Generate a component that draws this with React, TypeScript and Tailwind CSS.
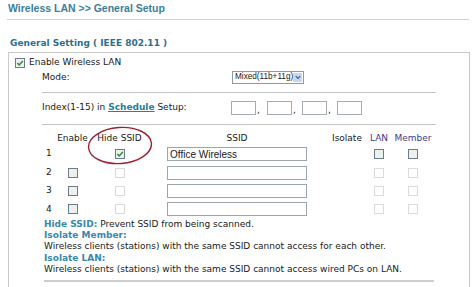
import clsx from "clsx"

const body = "font-['DejaVu_Sans',sans-serif]"

function Check({ checked, disabled }: { checked?: boolean; disabled?: boolean }) {
  return (
    <span
      className={clsx(
        "flex h-[10px] w-[10px] items-center justify-center border",
        disabled ? "border-[#dadada] bg-white" : "border-[#6a7c8e] bg-[#eef0ec]"
      )}
    >
      {checked && (
        <svg viewBox="0 0 8 8" className="h-[8px] w-[8px]">
          <path d="M1.3 4 L3.2 5.9 L6.8 2" stroke="#2f8a3c" strokeWidth="1.5" fill="none" />
        </svg>
      )}
    </span>
  )
}

function SmallBox() {
  return <span className="block h-[14px] w-[25px] border border-[#a4adb6] bg-white" />
}

const rows = [
  { n: "1", enable: false, hide: true, ssid: "Office Wireless", on: true },
  { n: "2", enable: true, hide: false, ssid: "", on: false },
  { n: "3", enable: true, hide: false, ssid: "", on: false },
  { n: "4", enable: true, hide: false, ssid: "", on: false },
]

export default function App() {
  return (
    <div className={clsx("h-[287px] w-[474px] overflow-hidden bg-white text-[9px] text-[#202020]", body)}>
      {/* page title */}
      <div className="ml-[8px] pt-[2px] font-['Liberation_Sans',Arial,sans-serif] text-[10.5px] font-bold leading-[12px] text-[#3c7e9d]">
        Wireless LAN &gt;&gt; General Setup
      </div>
      <div className="ml-[7px] mt-[5px] h-px w-[462px] bg-[#cfcfcf]" />

      <div className="ml-[10px] mt-[18px] font-bold leading-[11px] text-[#2f6f8e]">
        General Setting ( IEEE 802.11 )
      </div>

      <div className="ml-[8px] mt-[3px] w-[462px] border border-b-0 border-[#c9c9c9] pb-[10px]">
        <div className="ml-[6px] mt-[4px] flex h-[11px] items-center gap-[4px] leading-[11px]">
          <Check checked />
          <span>Enable Wireless LAN</span>
        </div>

        {/* mode */}
        <div className="ml-[33px] mt-[3px] flex h-[13px] items-center">
          <span className="w-[190px]">Mode:</span>
          <span className="flex h-[13px] w-[72px] items-center justify-between whitespace-nowrap border border-[#8a9aab] bg-white pl-[2px] pr-[1px] font-['Liberation_Sans',Arial,sans-serif] text-[8.2px] leading-none">
            Mixed(11b+11g)
            <span className="flex h-[9px] w-[9px] items-center justify-center rounded-[1px] bg-[#c6d6f2]">
              <svg viewBox="0 0 8 6" className="h-[5px] w-[6px]">
                <path d="M1 1.2 L4 4.3 L7 1.2" stroke="#4d6185" strokeWidth="1.6" fill="none" />
              </svg>
            </span>
          </span>
        </div>
        <div className="ml-[33px] mt-[8px] h-px w-[394px] bg-[#c4c4c4]" />

        {/* schedule */}
        <div className="ml-[33px] mt-[8px] flex h-[14px] items-center">
          <span className="w-[189px]">
            Index(1-15) in{" "}
            <span className="font-bold text-[#2b7d9c] underline">Schedule</span> Setup:
          </span>
          <SmallBox />
          <span className="flex h-[14px] w-[11px] items-end pl-[1px] leading-none">,</span>
          <SmallBox />
          <span className="flex h-[14px] w-[10px] items-end pl-[1px] leading-none">,</span>
          <SmallBox />
          <span className="flex h-[14px] w-[10px] items-end pl-[1px] leading-none">,</span>
          <SmallBox />
        </div>
        <div className="ml-[33px] mt-[9px] h-px w-[394px] bg-[#c4c4c4]" />

        {/* ssid table */}
        <div className="relative ml-[33px] mt-[8px]">
          <div className="flex h-[11px] items-center leading-[11px]">
            <span className="w-[22px]" />
            <span className="flex w-[17px] justify-center whitespace-nowrap">Enable</span>
            <span className="flex w-[77px] justify-center whitespace-nowrap">Hide SSID</span>
            <span className="flex w-[149px] justify-center pl-[9px]">SSID</span>
            <span className="w-[59px] pl-[25px]">Isolate</span>
            <span className="flex w-[26px] justify-center text-[#3b3b8a]">LAN</span>
            <span className="flex w-[42px] justify-center text-[#3b3b8a]">Member</span>
          </div>
          <div className="mt-[1px]">
            {rows.map((r) => (
              <div key={r.n} className="flex h-[18.4px] items-center">
                <span className="w-[22px] pl-[4px]">{r.n}</span>
                <span className="flex w-[17px] justify-center">{r.enable && <Check />}</span>
                <span className="flex w-[77px] justify-center">
                  <Check checked={r.hide} disabled={!r.on} />
                </span>
                <span className="w-[149px] pl-[9px]">
                  <span className="flex h-[14px] w-[140px] items-center border border-[#9ba5ae] bg-white pl-[2px] font-['Liberation_Sans',Arial,sans-serif] text-[10px]">
                    {r.ssid}
                  </span>
                </span>
                <span className="w-[59px]" />
                <span className="flex w-[26px] justify-center">
                  <Check disabled={!r.on} />
                </span>
                <span className="flex w-[42px] justify-center">
                  <Check disabled={!r.on} />
                </span>
              </div>
            ))}
          </div>
          <svg className="absolute left-[45px] top-[-7px]" width="66" height="39" viewBox="0 0 66 39">
            <ellipse cx="33" cy="19.5" rx="31.5" ry="18" fill="none" stroke="#9c2232" strokeWidth="1.4" transform="rotate(-4 33 19.5)" />
          </svg>
        </div>

        {/* notes */}
        <div className="ml-[35px] mt-[0.5px] leading-[11.2px]">
          <div>
            <span className="font-bold text-[#3a88ab]">Hide SSID:</span> Prevent SSID from being scanned.
          </div>
          <div className="font-bold text-[#3a88ab]">Isolate Member:</div>
          <div>Wireless clients (stations) with the same SSID cannot access for each other.</div>
          <div className="font-bold text-[#3a88ab]">Isolate LAN:</div>
          <div>Wireless clients (stations) with the same SSID cannot access wired PCs on LAN.</div>
        </div>
        <div className="ml-[35px] mt-[4.5px] h-[2px] w-[390px] bg-[#cdcdcd]" />
      </div>
    </div>
  )
}
